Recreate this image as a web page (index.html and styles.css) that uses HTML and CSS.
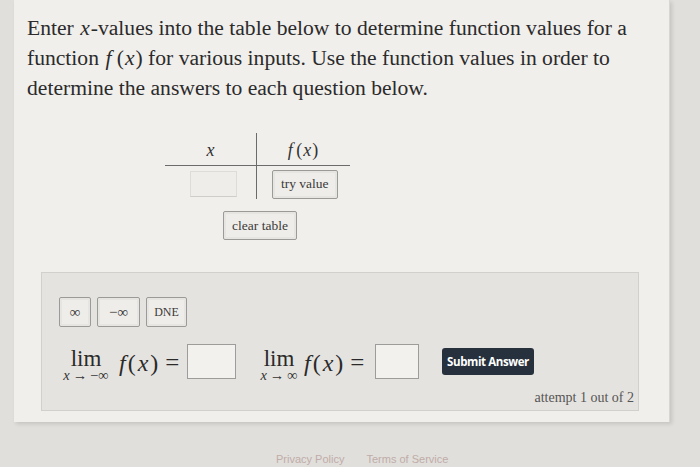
FILE: index.html
```html
<!DOCTYPE html>
<html>
<head>
<meta charset="utf-8">
<link rel="stylesheet" href="styles.css">
</head>
<body>
<div class="page">
  <div class="card">
    <p class="intro">Enter <i class="m">x</i>-values into the table below to determine function values for a function <i class="m">f</i>&#8201;(<i class="m">x</i>) for various inputs. Use the function values in order to determine the answers to each question below.</p>

    <div class="tablewrap">
      <div class="tbl">
        <div class="hcell left"><i class="m">x</i></div>
        <div class="hcell right"><i class="m">f</i>&#8202;(<i class="m">x</i>)</div>
        <div class="bcell left"><span class="xinput"></span></div>
        <div class="bcell right"><span class="btn">try value</span></div>
      </div>
      <span class="btn clear">clear table</span>
    </div>

    <div class="answer">
      <div class="chips">
        <span class="btn chip">&infin;</span>
        <span class="btn chip wide">&minus;&infin;</span>
        <span class="btn chip dne">DNE</span>
      </div>
      <div class="limrow">
        <span class="lim first"><span class="limword">lim</span><span class="limsub"><i class="m">x</i>&thinsp;&rarr;&thinsp;&minus;&infin;</span></span>
        <span class="expr first"><span class="fx"><i class="m">f</i>(<i class="m">x</i>)</span><span class="eq">=</span></span>
        <span class="box first"></span>
        <span class="lim second"><span class="limword">lim</span><span class="limsub"><i class="m">x</i>&thinsp;&rarr;&thinsp;&infin;</span></span>
        <span class="expr second"><span class="fx"><i class="m">f</i>(<i class="m">x</i>)</span><span class="eq">=</span></span>
        <span class="box second"></span>
        <span class="submit">Submit Answer</span>
      </div>
      <div class="attempt">attempt 1 out of 2</div>
    </div>
  </div>
  <div class="footer"><span>Privacy Policy</span><span>Terms of Service</span></div>
</div>
</body>
</html>
```

FILE: styles.css
```css
html, body {
  margin: 0;
  padding: 0;
}
body {
  width: 700px;
  height: 467px;
  overflow: hidden;
  background: #e1dfdb;
  font-family: "Liberation Serif", "DejaVu Serif", serif;
  color: #2a2a2a;
}
.page {
  padding-left: 14px;
  padding-right: 30px;
}
.card {
  background: #f1efeb;
  height: 422px;
  box-sizing: border-box;
  padding: 13px 0 0 0;
  box-shadow: 2px 2px 4px rgba(0,0,0,0.12);
  border-right: 1px solid #d8d6d2;
}
.intro {
  margin: 0;
  padding: 0 10px 0 13px;
  font-size: 21.6px;
  line-height: 30px;
  color: #2b2b2b;
}
.intro .m {
  padding: 0 1px;
}
.m {
  font-family: "Liberation Serif", "DejaVu Serif", serif;
  font-style: italic;
}
.tablewrap {
  margin-top: 30px;
  display: flex;
  flex-direction: column;
  align-items: flex-start;
  padding-left: 151px;
}
.tbl {
  display: grid;
  grid-template-columns: 92px 93px;
  grid-template-rows: 33px 33px;
}
.hcell {
  font-size: 18px;
  text-align: center;
  padding-top: 7px;
  border-bottom: 1px solid #6b6b6b;
  color: #333;
}
.hcell.right {
  letter-spacing: 1px;
}
.hcell.left, .bcell.left {
  border-right: 1px solid #6b6b6b;
}
.bcell {
  display: flex;
  align-items: center;
  padding-top: 3px;
}
.bcell.left {
  justify-content: flex-end;
  padding-right: 19px;
}
.bcell.right {
  padding-left: 15px;
}
.xinput {
  display: block;
  width: 47px;
  height: 26px;
  border: 1px solid #dedcd8;
  border-bottom-color: #cfcdc9;
  background: #efede9;
  box-sizing: border-box;
}
.btn {
  display: inline-flex;
  align-items: center;
  justify-content: center;
  box-sizing: border-box;
  height: 29px;
  padding: 0 8px;
  border: 1px solid #9a9a98;
  border-radius: 2px;
  background: #efede9;
  box-shadow: inset 0 0 0 2px #e7e5e1;
  font-size: 13.5px;
  color: #3a3a3a;
}
.clear {
  margin-top: 12px;
  margin-left: 58px;
  width: 74px;
}
.answer {
  margin: 32px 30px 0 27px;
  height: 139px;
  box-sizing: border-box;
  background: #e5e3df;
  border: 1px solid #d2d0cc;
  padding: 24px 4px 0 17px;
  position: relative;
}
.chips {
  display: flex;
  gap: 6px;
}
.chip {
  width: 32px;
  height: 30px;
  padding: 0;
  font-size: 15px;
}
.chip.wide {
  width: 43px;
}
.chip.dne {
  width: 41px;
  font-size: 12px;
}
.limrow {
  display: flex;
  align-items: center;
  margin-top: 15px;
  height: 38px;
}
.lim {
  display: inline-flex;
  flex-direction: column;
  align-items: center;
  position: relative;
  top: 5px;
}
.lim.first {
  width: 54px;
}
.lim.second {
  margin-left: 21px;
  width: 44px;
}
.limword {
  font-size: 23px;
  line-height: 18px;
}
.limsub {
  font-size: 14.5px;
  line-height: 14px;
  color: #333;
  white-space: nowrap;
}
.expr {
  display: flex;
  justify-content: flex-start;
  align-items: baseline;
  gap: 5px;
  font-size: 24px;
  white-space: nowrap;
  position: relative;
  top: 2px;
}
.fx {
  letter-spacing: 2px;
}
.eq {
  font-size: 25px;
}
.expr.first {
  margin-left: 6px;
  width: 63px;
  margin-right: 5px;
}
.expr.second {
  margin-left: 3px;
  width: 65px;
  margin-right: 6px;
}
.box {
  display: block;
  width: 49px;
  height: 35px;
  box-sizing: border-box;
  border: 1px solid #9c9c9a;
  background: #f3f1ed;
}
.box.second {
  width: 44px;
}
.submit {
  margin-left: 23px;
  background: #26313d;
  color: #fff;
  font-family: "Open Sans", "Liberation Sans", sans-serif;
  font-weight: 700;
  font-size: 11.5px;
  letter-spacing: -0.4px;
  height: 27px;
  width: 92px;
  display: inline-flex;
  align-items: center;
  justify-content: center;
  border-radius: 3px;
}
.attempt {
  position: absolute;
  right: 4px;
  bottom: 4px;
  font-size: 14px;
  color: #555;
}
.footer {
  display: flex;
  gap: 22px;
  padding-left: 262px;
  margin-top: 31px;
  font-family: "Liberation Sans", sans-serif;
  font-size: 11px;
  line-height: 13px;
  color: #c0aca8;
}
```
